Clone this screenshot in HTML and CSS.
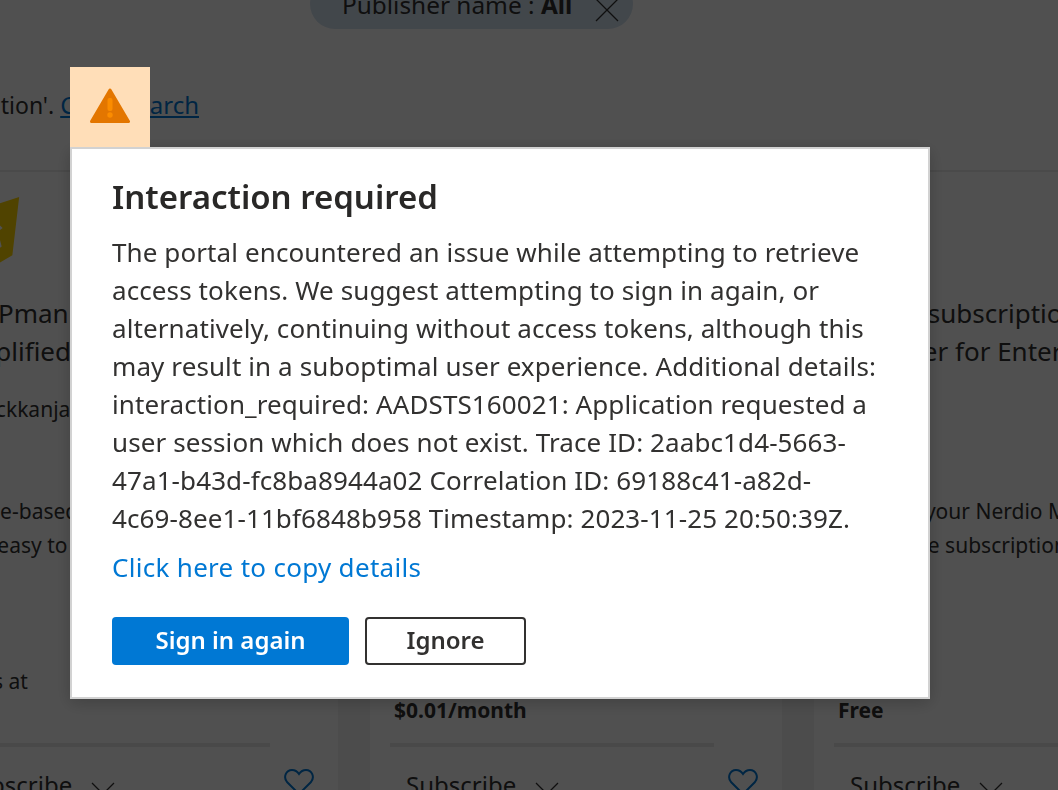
FILE: index.html
```html
<!DOCTYPE html>
<html lang="en">
<head>
  <meta charset="UTF-8">
  <meta name="viewport" content="width=device-width, initial-scale=1.0">
  <title>Marketplace - Interaction required</title>
  <link rel="stylesheet" href="styles.css">
</head>
<body>
  <div class="page">
    <!-- Filter chip -->
    <div class="filter-row">
      <div class="filter-chip">
        <span>Publisher name : <b>All</b></span>
        <svg class="chip-close" width="26" height="26" viewBox="0 0 26 26"><path d="M2 2l22 22M24 2L2 24" fill="none" stroke="currentColor" stroke-width="1.3"/></svg>
      </div>
    </div>

    <div class="result-note">Showing results for 'subscription'. <a href="#">Clear search</a></div>

    <!-- Offer cards -->
    <div class="card-grid">
      <div class="card">
        <svg class="card-logo" width="60" height="72" viewBox="0 0 60 72"><path d="M60 1L53 61 36 71 36 56 42 52 40 44 36 42 36 38 43 33 39 29 36 29 36 9z" fill="#ffd500"/></svg>
        <div class="card-title">API Pman<br>Simplified</div>
        <div class="card-publisher">by jackkanja</div>
        <div class="card-desc">Usage-based<br>very easy to set up</div>
        <div class="card-extra">Plans at</div>
        <div class="card-price">&nbsp;</div>
        <div class="card-footer">
          <span class="subscribe">Subscribe <svg width="24" height="12" viewBox="0 0 24 12"><path d="M1 1l11 11L23 1" fill="none" stroke="currentColor" stroke-width="1.3"/></svg></span>
          <svg class="heart" width="30" height="28" viewBox="0 0 30 28"><path d="M15 26L3 14C-1 9 2 2 8 2c3 0 5 1 7 4 2-3 4-4 7-4 6 0 9 7 5 12z" fill="none" stroke="#0078d4" stroke-width="2"/></svg>
        </div>
      </div>
      <div class="card">
        <div class="card-logo"></div>
        <div class="card-title">&nbsp;<br>&nbsp;</div>
        <div class="card-publisher">&nbsp;</div>
        <div class="card-desc">&nbsp;<br>&nbsp;</div>
        <div class="card-extra">&nbsp;</div>
        <div class="card-price">$0.01/month</div>
        <div class="card-footer">
          <span class="subscribe">Subscribe <svg width="24" height="12" viewBox="0 0 24 12"><path d="M1 1l11 11L23 1" fill="none" stroke="currentColor" stroke-width="1.3"/></svg></span>
          <svg class="heart" width="30" height="28" viewBox="0 0 30 28"><path d="M15 26L3 14C-1 9 2 2 8 2c3 0 5 1 7 4 2-3 4-4 7-4 6 0 9 7 5 12z" fill="none" stroke="#0078d4" stroke-width="2"/></svg>
        </div>
      </div>
      <div class="card">
        <div class="card-logo"></div>
        <div class="card-title">Nerdio subscription<br>Manager for Enterprise</div>
        <div class="card-publisher">&nbsp;</div>
        <div class="card-desc">Connect your Nerdio Manager<br>Enterprise subscription</div>
        <div class="card-extra">&nbsp;</div>
        <div class="card-price">Free</div>
        <div class="card-footer">
          <span class="subscribe">Subscribe <svg width="24" height="12" viewBox="0 0 24 12"><path d="M1 1l11 11L23 1" fill="none" stroke="currentColor" stroke-width="1.3"/></svg></span>
        </div>
      </div>
    </div>
  </div>

  <!-- Dialog -->
  <div class="overlay">
    <div class="dialog">
      <div class="dialog-badge">
        <svg width="40" height="36" viewBox="0 0 40 36"><path d="M20 2L38.500 33.500H1.500z" fill="#e37600" stroke="#e37600" stroke-width="3" stroke-linejoin="round"/><rect x="17.500" y="10" width="5" height="13" rx="2" fill="#fb8c00"/><circle cx="20" cy="27" r="2.700" fill="#fb8c00"/></svg>
      </div>
      <h1 class="dialog-title">Interaction required</h1>
      <p class="dialog-text">The portal encountered an issue while attempting to retrieve<br>access tokens. We suggest attempting to sign in again, or<br>alternatively, continuing without access tokens, although this<br>may result in a suboptimal user experience. Additional details:<br>interaction_required: AADSTS160021: Application requested a<br>user session which does not exist. Trace ID: 2aabc1d4-5663-<br>47a1-b43d-fc8ba8944a02 Correlation ID: 69188c41-a82d-<br>4c69-8ee1-11bf6848b958 Timestamp: 2023-11-25 20:50:39Z.</p>
      <a class="dialog-link" href="#">Click here to copy details</a>
      <div class="dialog-actions">
        <button class="btn btn-primary">Sign in again</button>
        <button class="btn btn-secondary">Ignore</button>
      </div>
    </div>
  </div>
</body>
</html>
```
FILE: styles.css
```css
body, html {
  margin: 0;
  padding: 0;
  height: 100%;
  overflow: hidden;
  font-family: "Noto Sans", "Open Sans", sans-serif;
  color: #323130;
  background-color: white;
}

/* Page behind the dialog */
.page {
  height: 100%;
  overflow: hidden;
}

.filter-row {
  display: flex;
  padding-left: 310px;
  height: 29px;
  align-items: flex-end;
}

.filter-chip {
  flex: none;
  display: flex;
  align-items: center;
  gap: 22px;
  height: 50px;
  width: 323px;
  box-sizing: border-box;
  padding: 1px 12px 0 32px;
  background-color: #d3e2ef;
  border-radius: 25px;
  font-size: 24.400px;
  white-space: nowrap;
}

.chip-close {
  flex: none;
  margin-top: 10px;
}

.result-note {
  margin: 59px 0 0 -310px;
  width: 509px;
  text-align: right;
  font-size: 23px;
  line-height: 34px;
  white-space: nowrap;
}

.result-note a {
  font-size: 24px;
  color: #0078d4;
}

.card-grid {
  display: flex;
  gap: 32px;
  margin: 48px 0 0 0;
  height: 620px;
  background-color: #f3f3f3;
  border-top: 2px solid #ebebeb;
}

.card {
  flex: none;
  width: 412px;
  box-sizing: border-box;
  padding: 24px 24px 0;
  background-color: white;
}

.card:first-child {
  margin-left: -74px;
}

.card-logo {
  display: block;
  width: 60px;
  height: 70px;
  margin-left: 10px;
  overflow: visible;
}

.card-title {
  margin-top: 28px;
  font-size: 26px;
  line-height: 38px;
  white-space: nowrap;
}

.card-publisher {
  margin-top: 24px;
  font-size: 21px;
  line-height: 30px;
  white-space: nowrap;
}

.card-desc {
  margin-top: 70px;
  font-size: 21px;
  line-height: 34px;
  white-space: nowrap;
}

.card-extra {
  margin-top: 104px;
  font-size: 21px;
  line-height: 30px;
  white-space: nowrap;
}

.card-price {
  font-size: 21px;
  line-height: 28px;
  font-weight: bold;
}

.card-footer {
  display: flex;
  justify-content: space-between;
  width: 324px;
  margin: 19px 0 0 -4px;
  padding-top: 21px;
  border-top: 4px solid #e8e8e8;
}

.subscribe {
  margin-left: 16px;
  font-size: 24px;
  line-height: 34px;
  white-space: nowrap;
}

.subscribe svg {
  margin-left: 13px;
}

.heart {
  flex: none;
  margin-right: -44px;
}

/* Dialog */
.overlay {
  position: fixed;
  top: 0;
  left: 0;
  width: 100%;
  height: 100%;
  background-color: rgba(0, 0, 0, 0.686);
}

.dialog {
  position: absolute;
  top: 147px;
  left: 70px;
  width: 860px;
  height: 552px;
  box-sizing: border-box;
  padding: 24px 40px 0;
  background-color: white;
  border: 2px solid #d2d2d2;
  box-shadow: 0 4px 16px rgba(0, 0, 0, 0.2);
}

.dialog-badge {
  position: absolute;
  top: -82px;
  left: -2px;
  width: 80px;
  height: 80px;
  box-sizing: border-box;
  padding-bottom: 3px;
  display: flex;
  align-items: center;
  justify-content: center;
  background-color: #ffdeb8;
}

.dialog-title {
  margin: 0;
  font-size: 33px;
  line-height: 48px;
  font-weight: 600;
  color: #292827;
}

.dialog-text {
  margin: 12px 0 0;
  font-size: 26px;
  letter-spacing: 0.100px;
  line-height: 38px;
  color: #323130;
  white-space: nowrap;
}

.dialog-link {
  display: block;
  margin-top: 11px;
  font-size: 26px;
  letter-spacing: 0.300px;
  line-height: 38px;
  color: #0078d4;
  text-decoration: none;
}

.dialog-actions {
  display: flex;
  gap: 16px;
  margin-top: 31px;
}

.btn {
  height: 48px;
  box-sizing: border-box;
  padding: 0 0 3px;
  font-family: inherit;
  font-size: 24px;
  font-weight: 600;
  border-radius: 4px;
  cursor: pointer;
}

.btn-primary {
  width: 237px;
  color: white;
  background-color: #0078d4;
  border: none;
}

.btn-secondary {
  width: 161px;
  color: #323130;
  background-color: white;
  border: 2px solid #323130;
}
```
